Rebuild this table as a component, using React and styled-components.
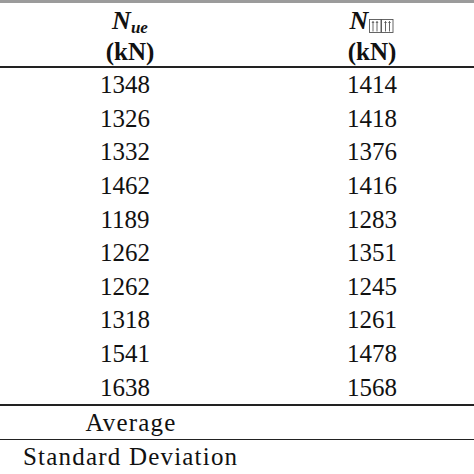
import React from 'react';
import styled, { createGlobalStyle } from 'styled-components';

const serif = `"Liberation Serif", "Times New Roman", "DejaVu Serif", serif`;

const GlobalStyle = createGlobalStyle`
  html, body {
    margin: 0;
    padding: 0;
    background: #ffffff;
  }
  body {
    font-family: ${serif};
    color: #111;
    overflow: hidden;
  }
`;

const rows = [
  [1348, 1414],
  [1326, 1418],
  [1332, 1376],
  [1462, 1416],
  [1189, 1283],
  [1262, 1351],
  [1262, 1245],
  [1318, 1261],
  [1541, 1478],
  [1638, 1568],
];

// missing-glyph boxes shown in the source after the N
const Tofu = () => (
  <svg width="25" height="14" viewBox="0 0 25 14" style={{ verticalAlign: '-4px', marginLeft: '1px' }}>
    <g fill="none" stroke="#555" strokeWidth="0.9">
      <rect x="0.5" y="0.5" width="11.5" height="13" />
      <rect x="12.5" y="0.5" width="11.5" height="13" />
      <path d="M4 2.5v10M8 2.5v10M16.5 2.5v10M20.5 2.5v10" />
      <path d="M3 4l1-1.5 1 1.5M7 4l1-1.5 1 1.5M15.5 4l1-1.5 1 1.5M19.5 4l1-1.5 1 1.5" />
    </g>
  </svg>
);

const App = () => (
  <>
    <GlobalStyle />
    <Table>
      <Header>
        <HeadCell $shift="10px">
          <Symbol>
            N<Sub>ue</Sub>
          </Symbol>
          <Unit>(kN)</Unit>
        </HeadCell>
        <HeadCell $shift="20px">
          <Symbol>
            N<Tofu />
          </Symbol>
          <Unit>(kN)</Unit>
        </HeadCell>
      </Header>
      <Body>
        {rows.map(([a, b], i) => (
          <Row key={i}>
            <Cell>{a}</Cell>
            <Cell $right>{b}</Cell>
          </Row>
        ))}
      </Body>
      <FootRow $rule>
        <Label $center>Average</Label>
        <Cell $right />
      </FootRow>
      <FootRow>
        <Label>Standard Deviation</Label>
      </FootRow>
    </Table>
  </>
);

export default App;

const Table = styled.div`
  width: 474px;
  height: 474px;
  border-top: 3px solid #9b9b9b;
  box-sizing: border-box;
  font-family: ${serif};
`;

const Header = styled.div`
  display: grid;
  grid-template-columns: 250px 1fr;
  height: 63px;
  border-bottom: 2px solid #222;
`;

const HeadCell = styled.div`
  display: flex;
  flex-direction: column;
  align-items: center;
  padding-left: ${(p) => p.$shift || '0'};
  padding-top: 2px;
  font-weight: bold;
  font-family: ${serif};
`;

const Symbol = styled.div`
  font-style: italic;
  font-size: 26px;
  line-height: 31px;
  height: 31px;
  white-space: nowrap;
`;

const Sub = styled.span`
  font-size: 17px;
  vertical-align: -4px;
`;

const Unit = styled.div`
  font-size: 25px;
  line-height: 31px;
`;

const Body = styled.div`
  border-bottom: 2px solid #222;
`;

const Row = styled.div`
  display: grid;
  grid-template-columns: 250px 1fr;
  height: 33.6px;
  align-items: center;
`;

const Cell = styled.div`
  text-align: center;
  font-family: ${serif};
  font-size: 25px;
  line-height: 33px;
  padding-left: ${(p) => (p.$right ? '20px' : '0')};
`;

const FootRow = styled.div`
  display: grid;
  grid-template-columns: 250px 1fr;
  height: 33px;
  align-items: center;
  border-bottom: ${(p) => (p.$rule ? '1px solid #222' : 'none')};
`;

const Label = styled.div`
  font-family: ${serif};
  font-size: 25px;
  line-height: 33px;
  letter-spacing: 1.2px;
  white-space: nowrap;
  text-align: ${(p) => (p.$center ? 'center' : 'left')};
  padding-left: ${(p) => (p.$center ? '12px' : '23px')};
`;
